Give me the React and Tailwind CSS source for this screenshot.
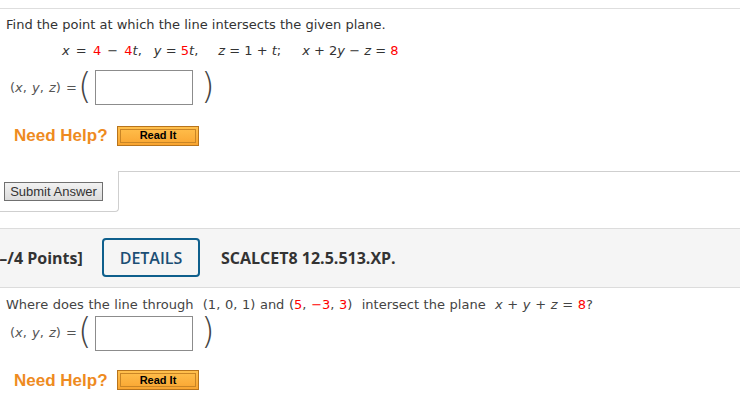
import React from 'react';

const verdana = { fontFamily: '"DejaVu Sans", Verdana, sans-serif' };

function R({ children }) {
  return <span className="text-[#ff0000]">{children}</span>;
}

function V({ children }) {
  return <i>{children}</i>;
}

function ReadIt() {
  return (
    <button className="h-[20px] w-[82px] border border-[#b8741c] bg-gradient-to-b from-[#ffc04d] to-[#f9a530] p-[2px] font-['Liberation_Sans',Arial,sans-serif] text-[11px] font-bold leading-none text-black">
      <span className="flex h-full w-full items-center justify-center border border-[#c98526]">Read It</span>
    </button>
  );
}

function NeedHelp() {
  return (
    <div className="flex items-center">
      <span className="ml-[14px] w-[103px] whitespace-nowrap font-['Liberation_Sans',Arial,sans-serif] text-[17px] font-bold text-[#ee8b1f]">Need Help?</span>
      <ReadIt />
    </div>
  );
}

function AnswerRow() {
  return (
    <div className="flex h-[35px] items-center text-[13px] text-[#555]" style={verdana}>
      <span className="ml-[10px] w-[68px] whitespace-nowrap [word-spacing:1px]">
        (<V>x</V>, <V>y</V>, <V>z</V>) =
      </span>
      <span className="mb-[3px] w-[17px] text-[35px] font-thin leading-none text-[#444]">(</span>
      <div className="h-[35px] w-[98px] border border-[#8c8c8c] bg-white" />
      <span className="mb-[3px] ml-[8px] text-[35px] font-thin leading-none text-[#444]">)</span>
    </div>
  );
}

export default function App() {
  return (
    <div className="h-[412px] w-[740px] overflow-hidden bg-white text-[#333]">
      <div className="mt-[8px] border-t border-[#dedede]" />
      <div className="ml-[6px] mt-[7px] text-[13px] leading-[18px]" style={verdana}>
        Find the point at which the line intersects the given plane.
      </div>
      <div className="ml-[62px] mt-[8px] flex text-[13px] leading-[18px] whitespace-pre" style={verdana}>
        <span className="[word-spacing:2px]"><V>x</V> = <R>4</R> − <R>4</R><V>t</V>,</span>
        <span className="ml-[12px]"><V>y</V> = <R>5</R><V>t</V>,</span>
        <span className="ml-[20px]"><V>z</V> = 1 + <V>t</V>;</span>
        <span className="ml-[21px]"><V>x</V> + 2<V>y</V> − <V>z</V> = <R>8</R></span>
      </div>
      <div className="mt-[10px]">
        <AnswerRow />
      </div>
      <div className="mt-[18px]">
        <NeedHelp />
      </div>
      <div className="mt-[22px] flex h-[41px]">
        <div className="flex w-[119px] items-center rounded-br-[4px] border-b border-r border-[#cfcfcf]">
          <button className="ml-[4px] mt-[1px] h-[19px] w-[99px] border border-[#707070] bg-gradient-to-b from-[#f2f2f2] to-[#dcdcdc] font-['Liberation_Sans',Arial,sans-serif] text-[13px] leading-none text-[#333]">
            Submit Answer
          </button>
        </div>
        <div className="flex-1 border-t border-[#cfcfcf]" />
      </div>
      <div className="mt-[16px] flex h-[60px] items-center border-y border-[#dcdcdc] bg-[#f5f5f5] font-['Open_Sans',sans-serif] text-[16px] font-bold text-[#333]">
        <span className="-ml-[6px] w-[108px] whitespace-nowrap">[–/4 Points]</span>
        <span className="flex h-[39px] w-[98px] items-center justify-center rounded-[4px] border-2 border-[#0e5f8c] text-[16px] font-semibold text-[#1b4e74]">
          DETAILS
        </span>
        <span className="ml-[21px] whitespace-nowrap">SCALCET8 12.5.513.XP.</span>
      </div>
      <div className="ml-[6px] mt-[8px] text-[13px] leading-[18px] whitespace-pre text-[#444] [word-spacing:0.5px]" style={verdana}>
        Where does the line through  (1, 0, 1) and (<R>5</R>, <R>−3</R>, <R>3</R>)  intersect the plane  <V>x</V> + <V>y</V> + <V>z</V> = <R>8</R>?
      </div>
      <div className="mt-[2px]">
        <AnswerRow />
      </div>
      <div className="mt-[17px]">
        <NeedHelp />
      </div>
    </div>
  );
}
